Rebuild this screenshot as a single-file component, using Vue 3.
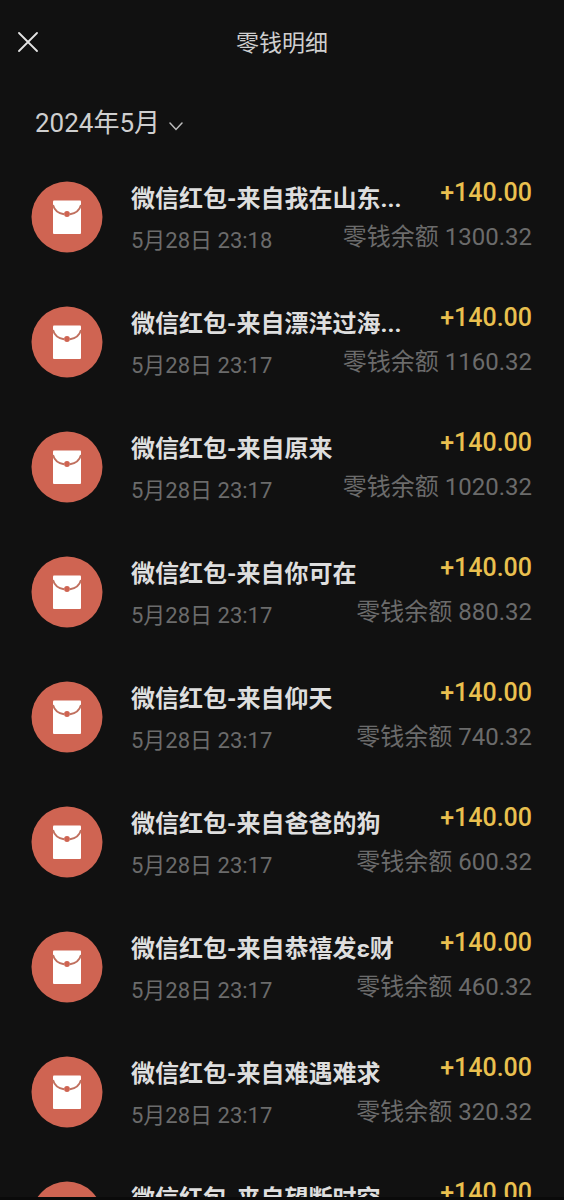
<script setup>
const entries = [
  { name: '我在山东...', time: '5月28日 23:18', balance: '1300.32' },
  { name: '漂洋过海...', time: '5月28日 23:17', balance: '1160.32' },
  { name: '原来', time: '5月28日 23:17', balance: '1020.32' },
  { name: '你可在', time: '5月28日 23:17', balance: '880.32' },
  { name: '仰天', time: '5月28日 23:17', balance: '740.32' },
  { name: '爸爸的狗', time: '5月28日 23:17', balance: '600.32' },
  { name: '恭禧发ε财', time: '5月28日 23:17', balance: '460.32' },
  { name: '难遇难求', time: '5月28日 23:17', balance: '320.32' },
  { name: '望断时空', time: '5月28日 23:17', balance: '180.32' },
]
</script>

<template>
  <div class="page">
    <header class="bar">
      <button class="close" type="button" aria-label="关闭">
        <svg viewBox="0 0 20 20" width="20" height="20" aria-hidden="true">
          <path d="M1 1 L19 19 M19 1 L1 19" fill="none" stroke="#e4e4e4" stroke-width="1.8" stroke-linecap="round" />
        </svg>
      </button>
      <h1 class="title">零钱明细</h1>
    </header>

    <button class="month" type="button">
      <span>2024年5月</span>
      <svg viewBox="0 0 14 9" width="14" height="9" aria-hidden="true">
        <path d="M1 1 L7 7.5 L13 1" fill="none" stroke="#bdbdbd" stroke-width="1.5" stroke-linecap="round" />
      </svg>
    </button>

    <ul class="list">
      <li v-for="entry in entries" :key="entry.name" class="row">
        <svg class="icon" viewBox="0 0 72 72" aria-hidden="true">
          <circle cx="36" cy="36" r="35.5" fill="#cf6452" />
          <rect x="22" y="19.5" width="28" height="33.5" rx="1" fill="#fff" />
          <path d="M22 24 C23.5 29.5 28 32.5 33 33.2 M50 24 C48.5 29.5 44 32.5 39 33.2" fill="none" stroke="#c0705f" stroke-width="1.9" />
          <circle cx="36" cy="33" r="2.9" fill="#cf6452" />
        </svg>
        <div class="info">
          <p class="name">微信红包-来自{{ entry.name }}</p>
          <p class="time">{{ entry.time }}</p>
        </div>
        <div class="money">
          <p class="amount">+140.00</p>
          <p class="balance">零钱余额 {{ entry.balance }}</p>
        </div>
      </li>
    </ul>
    <div class="edge"></div>
  </div>
</template>

<style>
body {
  background: #111;
}
</style>

<style scoped>
.page {
  display: flex;
  flex-direction: column;
  height: 100vh;
  overflow: hidden;
  background: #111;
  color: #d5d5d5;
  font-family: Roboto, "Noto Sans CJK SC", sans-serif;
}
h1,
p,
ul {
  margin: 0;
  padding: 0;
}
button {
  border: 0;
  padding: 0;
  background: none;
  color: inherit;
  font: inherit;
}
.bar {
  flex: none;
  display: grid;
  grid-template-columns: 20px 1fr 20px;
  align-items: center;
  height: 84px;
  padding: 0 18px;
}
.close svg {
  display: block;
}
.title {
  padding-top: 4px;
  font-size: 23px;
  font-weight: 400;
  line-height: 32px;
  text-align: center;
  color: #cfcfcf;
}
.month {
  flex: none;
  display: flex;
  align-items: center;
  align-self: flex-start;
  gap: 9px;
  height: 76px;
  padding-left: 35px;
  font-size: 26px;
  line-height: 36px;
  color: #cfcfcf;
}
.month span {
  padding-top: 2px;
}
.month svg {
  margin-top: 8px;
}
.list {
  flex: 1;
  min-height: 0;
  overflow: hidden;
  padding: 0 32px 0 31px;
  list-style: none;
}
.row {
  display: flex;
  align-items: center;
  height: 113px;
  margin-bottom: 12px;
}
.icon {
  flex: none;
  width: 72px;
  height: 72px;
  margin-right: 28px;
}
.info {
  flex: 1;
  min-width: 0;
  padding-top: 4px;
  white-space: nowrap;
}
.name {
  font-size: 24px;
  font-weight: 700;
  line-height: 36px;
  color: #dedede;
}
.time {
  margin-top: 8px;
  font-size: 22px;
  line-height: 32px;
  color: #6b6b6b;
}
.money {
  flex: none;
  margin-bottom: 4px;
  text-align: right;
  white-space: nowrap;
}
.amount {
  font-size: 25px;
  font-weight: 500;
  line-height: 36px;
  color: #e9c04f;
}
.balance {
  margin-top: 8px;
  font-size: 24px;
  line-height: 36px;
  color: #6b6b6b;
}
.edge {
  flex: none;
  height: 3px;
  background: #0a0a0a;
}
</style>
